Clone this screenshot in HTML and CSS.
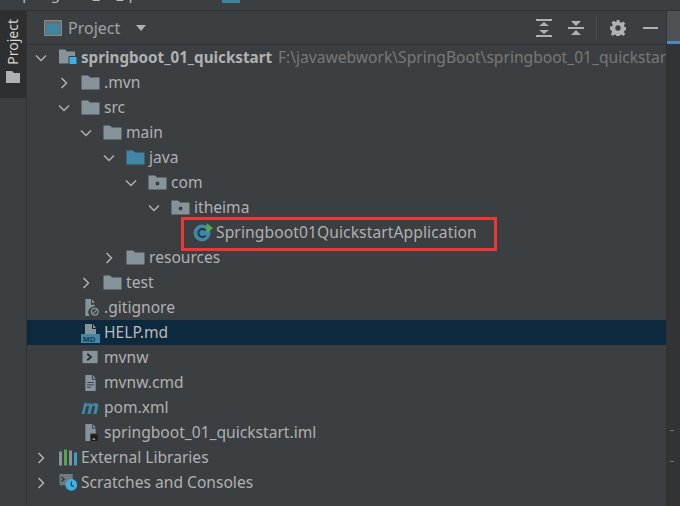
FILE: index.html
```html
<!DOCTYPE html>
<html lang="en">
<head>
<meta charset="utf-8">
<title>Project</title>
<link rel="stylesheet" href="styles.css">
</head>
<body>
<div class="topbar">
  <span class="crumbs">springboot_01_quickstart</span>
  <svg class="crumb-icon" width="18" height="3" viewBox="0 0 18 3"><path d="M0 0h18v3H0z" fill="#3e86a0"/></svg>
</div>
<div class="window">
  <aside class="rail">
    <div class="rail-tab">
      <span class="rail-label">Project</span>
      <svg width="14" height="12" viewBox="0 0 14 12"><path d="M0 0h6l2 2h6v10H0z" fill="#afb1b3"/></svg>
    </div>
  </aside>
  <main class="panel">
    <header class="head">
      <svg class="head-icon" width="18" height="16" viewBox="0 0 18 16"><rect x=".5" y=".5" width="17" height="15" fill="#6e6e6e" stroke="#7f8b91"/><rect x="2" y="4" width="14" height="10" fill="#3e86a0"/></svg>
      <span class="head-title">Project</span>
      <svg class="head-caret" width="10" height="6" viewBox="0 0 10 6"><path d="M0 0h10L5 6z" fill="#afb1b3"/></svg>
      <span class="spacer"></span>
      <svg class="tool" width="16" height="18" viewBox="0 0 16 18"><path d="M3 7h10L8 3zM3 11h10l-5 4z" fill="#afb1b3"/><path d="M0 0h16v2H0zM0 16h16v2H0z" fill="#afb1b3"/></svg>
      <svg class="tool tool-b" width="16" height="18" viewBox="0 0 16 18"><path d="M0 8h16v2H0zM3 2h10L8 7zM3 16h10l-5-5z" fill="#afb1b3"/></svg>
      <span class="sep"></span>
      <svg class="tool tool-c" width="16" height="16" viewBox="0 0 16 16"><path d="M6.600 0h2.800l.4 2.200 1.500.6 1.900-1.300 2 2-1.300 1.900.6 1.500 2.200.4v2.800l-2.200.4-.6 1.500 1.300 1.900-2 2-1.900-1.300-1.500.6-.4 2.200H6.600l-.4-2.200-1.500-.6-1.900 1.300-2-2 1.300-1.900-.6-1.500L0 9.400V6.600l2.200-.4.6-1.500-1.300-1.900 2-2 1.900 1.300 1.500-.6zM8 5.300a2.700 2.700 0 1 0 0 5.400 2.700 2.700 0 0 0 0-5.400z" fill="#afb1b3" fill-rule="evenodd"/></svg>
      <span class="dash"></span>
    </header>
    <div class="tree">
      <div class="row l0">
        <svg class="arrow" viewBox="0 0 12 12"><path d="M1 3.500l5 5 5-5"/></svg>
        <svg class="icon" viewBox="0 0 20 16"><path d="M1 0h6l2 2h8v12H1z" fill="#87939a"/><path d="M11 7h8v8h-8z" fill="#3eb1e3" stroke="#3c3f41"/></svg>
        <span class="name bold">springboot_01_quickstart</span><span class="path">F:\javawebwork\SpringBoot\springboot_01_quickstart</span>
      </div>
      <div class="row l1">
        <svg class="arrow" viewBox="0 0 12 12"><path d="M3.500 1l5 5-5 5"/></svg>
        <svg class="icon" viewBox="0 0 20 16"><use href="#folder"/></svg>
        <span class="name">.mvn</span>
      </div>
      <div class="row l1">
        <svg class="arrow" viewBox="0 0 12 12"><path d="M1 3.500l5 5 5-5"/></svg>
        <svg class="icon" viewBox="0 0 20 16"><use href="#folder"/></svg>
        <span class="name">src</span>
      </div>
      <div class="row l2">
        <svg class="arrow" viewBox="0 0 12 12"><path d="M1 3.500l5 5 5-5"/></svg>
        <svg class="icon" viewBox="0 0 20 16"><use href="#folder"/></svg>
        <span class="name">main</span>
      </div>
      <div class="row l3">
        <svg class="arrow" viewBox="0 0 12 12"><path d="M1 3.500l5 5 5-5"/></svg>
        <svg class="icon" viewBox="0 0 20 16"><path d="M.5 1h6.500l2 2h9.500v12H.5z" fill="#3f87a5"/></svg>
        <span class="name">java</span>
      </div>
      <div class="row l4">
        <svg class="arrow" viewBox="0 0 12 12"><path d="M1 3.500l5 5 5-5"/></svg>
        <svg class="icon" viewBox="0 0 20 16"><use href="#package"/></svg>
        <span class="name">com</span>
      </div>
      <div class="row l5">
        <svg class="arrow" viewBox="0 0 12 12"><path d="M1 3.500l5 5 5-5"/></svg>
        <svg class="icon" viewBox="0 0 20 16"><use href="#package"/></svg>
        <span class="name">itheima</span>
      </div>
      <div class="row l6">
        <svg class="icon over" width="20" height="17" viewBox="0 0 20 17"><circle cx="9" cy="9" r="8.500" fill="#3f87a5"/><path d="M12.500 6.500a4 4 0 1 0 0 5" fill="none" stroke="#26323a" stroke-width="1.800"/><path d="M13.500-1l6.500 5-6.500 5z" fill="#57a64a"/></svg>
        <span class="name wide">Springboot01QuickstartApplication</span>
        <span class="marker"></span>
      </div>
      <div class="row l3">
        <svg class="arrow" viewBox="0 0 12 12"><path d="M3.500 1l5 5-5 5"/></svg>
        <svg class="icon" viewBox="0 0 20 16"><use href="#folder"/></svg>
        <span class="name">resources</span>
      </div>
      <div class="row l2">
        <svg class="arrow" viewBox="0 0 12 12"><path d="M3.500 1l5 5-5 5"/></svg>
        <svg class="icon" viewBox="0 0 20 16"><use href="#folder"/></svg>
        <span class="name">test</span>
      </div>
      <div class="row leaf">
        <svg class="icon" viewBox="0 0 20 18"><path d="M4 0h6v6h4v2a6 6 0 0 0-6 9v1H4z M11 0l3 4h-3z" fill="#87939a"/><circle cx="14" cy="13.500" r="3.500" fill="none" stroke="#87939a" stroke-width="1.400"/><path d="M11.800 15.700l4.400-4.400" stroke="#87939a" stroke-width="1.200"/></svg>
        <span class="name">.gitignore</span>
      </div>
      <div class="row leaf selected">
        <svg class="icon over" width="20" height="17" viewBox="0 0 20 17"><path d="M4 0h7v5h4v5H4z M12 0l3 4h-3z" fill="#87939a"/><path d="M0 10h19v9H0z" fill="#3f87a5"/><text x="2" y="17.500" class="md">MD</text></svg>
        <span class="name">HELP.md</span>
      </div>
      <div class="row leaf">
        <svg class="icon" viewBox="0 0 20 18"><path d="M1 2h16v13H1z" fill="#87939a"/><path d="M6 5l4 3.500-4 3.500" fill="none" stroke="#2b2d2f" stroke-width="2"/></svg>
        <span class="name">mvnw</span>
      </div>
      <div class="row leaf">
        <svg class="icon" viewBox="0 0 20 18"><path d="M4 1h7v5h4v12H4z M12 1l3 4h-3z" fill="#87939a"/><path d="M6 9h7M6 11.500h7M6 14h4" stroke="#3c3f41"/></svg>
        <span class="name">mvnw.cmd</span>
      </div>
      <div class="row leaf">
        <svg class="icon" viewBox="0 0 20 18"><path d="M0 16L3 4h3l-.4 1.800C7 4.300 10 3.500 11 6c1.500-2 6.500-3 6.800 1L15.800 16h-3.300l1.800-8c0-1.600-2.400-1-3.200.4L9.400 16H6.200l1.700-8C8 6.500 5.500 7 4.700 8.600L3.200 16z" fill="#3f87a5"/></svg>
        <span class="name">pom.xml</span>
      </div>
      <div class="row leaf">
        <svg class="icon" viewBox="0 0 20 18"><path d="M4 0h7v5h4v5H9v8H4z M12 0l3 4h-3z" fill="#87939a"/><path d="M10 11h7v7h-7z" fill="#1c1c1c"/><path d="M11.500 16h3" stroke="#ddd"/></svg>
        <span class="name">springboot_01_quickstart.iml</span>
      </div>
      <div class="row l0">
        <svg class="arrow" viewBox="0 0 12 12"><path d="M3.500 1l5 5-5 5"/></svg>
        <svg class="icon compact" viewBox="0 0 20 16"><path d="M1 2h3v14H1z" fill="#87939a"/><path d="M6 0h3v16H6z" fill="#57a64a"/><path d="M11 1h3v15h-3z" fill="#87939a"/><path d="M16 3h3v13h-3z" fill="#3f9fc9"/></svg>
        <span class="name">External Libraries</span>
      </div>
      <div class="row l0">
        <svg class="arrow" viewBox="0 0 12 12"><path d="M3.500 1l5 5-5 5"/></svg>
        <svg class="icon compact" viewBox="0 0 20 18"><path d="M1 0h14v12H1z" fill="#6f7a80"/><path d="M3 3l3 2.500L3 8" fill="none" stroke="#2b2d2f" stroke-width="1.200"/><circle cx="13.500" cy="11.500" r="6.200" fill="#3eb1e3"/><path d="M13.500 8v4l2.500 1.500" fill="none" stroke="#1f3a48" stroke-width="1.200"/></svg>
        <span class="name">Scratches and Consoles</span>
      </div>
    </div>
  </main>
  <aside class="gutter">
    <div class="gutter-tab"></div>
    <div class="gutter-ticks">
      <span class="tick"></span>
      <span class="tick"></span>
    </div>
  </aside>
</div>
<svg class="defs" width="0" height="0" aria-hidden="true">
  <defs>
    <path id="folder" d="M.5 1h6.500l2 2h9.500v12H.5z" fill="#87939a"/>
    <path id="package" fill-rule="evenodd" d="M.5 1h6.500l2 2h9.500v12H.5zM9.500 7a2 2 0 1 0 0 4 2 2 0 0 0 0-4z" fill="#87939a"/>
  </defs>
</svg>
</body>
</html>
```

FILE: styles.css
```css
* { box-sizing: border-box; }
html, body { margin: 0; height: 100%; overflow: hidden; }
body {
  background: #3c3f41;
  color: #afb1b3;
  font-family: "Noto Sans", "Open Sans", sans-serif;
  font-size: 15.6px;
  width: 680px;
  height: 506px;
  position: relative;
}
.topbar {
  height: 11px;
  border-bottom: 1px solid #323232;
  overflow: hidden;
  display: flex;
  padding-left: 15px;
  line-height: 11px;
}
.crumbs { margin-top: -12px; color: #bbb; font-size: 15px; width: 207px; }
.window { display: flex; height: 495px; }
.rail { width: 27px; flex: none; background: #3c3f41; border-right: 1px solid #323232; }
.rail-tab {
  height: 87px;
  background: #2d2f30;
  display: flex;
  flex-direction: column;
  align-items: center;
  padding-top: 8px;
  gap: 6px;
}
.rail-label {
  writing-mode: vertical-rl;
  transform: rotate(180deg);
  font-size: 14px;
  line-height: 16px;
  color: #d4d4d4;
}
.panel { flex: 1; min-width: 0; display: flex; flex-direction: column; overflow: hidden; }
.head {
  height: 34px;
  flex: none;
  display: flex;
  align-items: center;
  padding-left: 17px;
  border-bottom: 1px solid #323232;
}
.head-title { margin-left: 6px; font-size: 16px; color: #a0a2a4; }
.head-caret { margin-left: 16px; }
.spacer { flex: 1; }
.tool-b { margin-left: 16px; }
.sep { width: 1px; height: 24px; background: #4a4d4f; margin-left: 12px; }
.tool-c { margin-left: 13px; }
.dash { width: 15px; height: 2px; background: #afb1b3; margin: 0 8px 0 17px; }
.tree { flex: 1; }
.row {
  height: 25px;
  display: flex;
  align-items: center;
  white-space: nowrap;
  position: relative;
  line-height: 25px;
}
.l0 { padding-left: 8px; }
.l1 { padding-left: 31px; }
.l2 { padding-left: 53px; }
.l3 { padding-left: 76px; }
.l4 { padding-left: 98px; }
.l5 { padding-left: 121px; }
.l6 { padding-left: 166px; }
.leaf { padding-left: 54px; }
.arrow {
  width: 12px;
  height: 12px;
  flex: none;
  fill: none;
  stroke: #afb1b3;
  stroke-width: 1.500;
}
.icon { width: 20px; height: 17px; flex: none; margin-left: 11px; }
.over { overflow: visible; }
.l6 .icon { margin-left: 0; }
.leaf .icon { margin-left: 0; }
.l0 .compact { margin-left: 11px; }
.name { margin-left: 3px; color: #afb1b3; }
.wide { letter-spacing: .1px; }
.bold { font-weight: 700; font-size: 15.200px; }
.path { margin-left: 6px; color: #787878; }
.selected { background: #0d293e; }
.selected .name { color: #bbbbbb; }
.md { font: 700 8px "Liberation Sans", sans-serif; fill: #1c3a4c; }
.marker {
  position: absolute;
  left: 154px;
  top: -3px;
  width: 316px;
  height: 34px;
  border: 3px solid #f03535;
}
.gutter {
  width: 14px;
  flex: none;
  background: #313335;
  border-left: 1px solid #323232;
}
.gutter-tab {
  height: 33px;
  background: #4e5254;
  border-bottom: 3px solid #4a88c7;
}
.gutter-ticks { padding-top: 386px; }
.tick {
  display: block;
  width: 4px;
  height: 1px;
  margin: 0 0 30px 3px;
  background: #777;
}
.defs { position: absolute; }
```
